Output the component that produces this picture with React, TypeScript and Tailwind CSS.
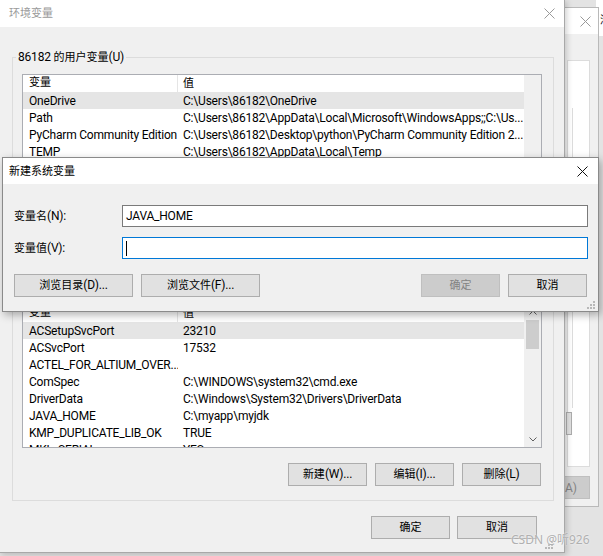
import React from "react";

const F = "font-['Roboto','Noto_Sans_CJK_SC',sans-serif]";

type Row = [string, string];

const userRows: Row[] = [
  ["OneDrive", "C:\\Users\\86182\\OneDrive"],
  ["Path", "C:\\Users\\86182\\AppData\\Local\\Microsoft\\WindowsApps;;C:\\Us..."],
  ["PyCharm Community Edition", "C:\\Users\\86182\\Desktop\\python\\PyCharm Community Edition 2..."],
  ["TEMP", "C:\\Users\\86182\\AppData\\Local\\Temp"],
  ["TMP", "C:\\Users\\86182\\AppData\\Local\\Temp"],
];

const sysRows: Row[] = [
  ["ACSetupSvcPort", "23210"],
  ["ACSvcPort", "17532"],
  ["ACTEL_FOR_ALTIUM_OVER...", ""],
  ["ComSpec", "C:\\WINDOWS\\system32\\cmd.exe"],
  ["DriverData", "C:\\Windows\\System32\\Drivers\\DriverData"],
  ["JAVA_HOME", "C:\\myapp\\myjdk"],
  ["KMP_DUPLICATE_LIB_OK", "TRUE"],
  ["MKL_SERIAL", "YES"],
  ["NUMBER_OF_PROCESSORS", "8"],
];

/* Chinese runs are drawn a little smaller than Latin runs, as in the UI font */
function T({ s }: { s: string }) {
  const parts = s.split(/([\u3400-\u9fff]+)/);
  return (
    <>
      {parts.map((p, i) =>
        /[\u3400-\u9fff]/.test(p) ? (
          <span key={i} className="text-[11px] tracking-normal">
            {p}
          </span>
        ) : (
          <span key={i} className="tracking-[-0.2px]">
            {p}
          </span>
        )
      )}
    </>
  );
}

function CloseX({ color }: { color: string }) {
  return (
    <svg width="11" height="11" viewBox="0 0 11 11">
      <path d="M0.5 0.5 L10.5 10.5 M10.5 0.5 L0.5 10.5" stroke={color} strokeWidth="1" />
    </svg>
  );
}

function Grip() {
  const pts = [
    [8, 2],
    [8, 5],
    [5, 5],
    [8, 8],
    [5, 8],
    [2, 8],
  ];
  return (
    <svg width="10" height="10" viewBox="0 0 10 10">
      {pts.map(([x, y], i) => (
        <rect key={i} x={x - 1} y={y - 1} width="2" height="2" fill="#b8b8b8" />
      ))}
    </svg>
  );
}

function Btn({ label, w, disabled }: { label: string; w: string; disabled?: boolean }) {
  return (
    <div
      className={`${w} h-[23px] flex items-center justify-center border text-[12px] ${
        disabled
          ? "bg-[#cccccc] border-[#bfbfbf] text-[#838383]"
          : "bg-[#e1e1e1] border-[#adadad] text-black"
      }`}
    >
      <span>
        <T s={label} />
      </span>
    </div>
  );
}

function ListView({
  rows,
  height,
  arrows,
}: {
  rows: Row[];
  height: string;
  arrows?: boolean;
}) {
  return (
    <div className={`${height} border border-[#abadb3] bg-white flex overflow-hidden`}>
      <div className="flex-1 flex flex-col overflow-hidden">
        <div className="h-[17px] shrink-0 flex items-center text-[12px]">
          <div className="w-[155px] h-full pl-[6px] flex items-center border-r border-[#e5e5e5]">
            <T s="变量" />
          </div>
          <div className="pl-[5px]">
            <T s="值" />
          </div>
        </div>
        {rows.map(([n, v], i) => (
          <div
            key={n}
            className={`h-[17px] shrink-0 flex items-center text-[12px] whitespace-nowrap tracking-[-0.2px] ${
              i === 0 ? "bg-[#e5e5e5]" : ""
            }`}
          >
            <div className="w-[155px] pl-[6px] overflow-hidden">{n}</div>
            <div className="pl-[5px] flex-1 overflow-hidden">{v}</div>
          </div>
        ))}
      </div>
      <div className="w-[17px] bg-[#f0f0f0] flex flex-col items-center">
        {arrows && (
          <div className="h-[15px] flex items-center justify-center">
            <svg width="8" height="5" viewBox="0 0 8 5">
              <path d="M0.5 4.5 L4 1 L7.5 4.5" stroke="#606060" fill="none" />
            </svg>
          </div>
        )}
        {arrows && <div className="w-[13px] h-[29px] bg-[#cdcdcd]" />}
        <div className="flex-1" />
        {arrows && (
          <div className="h-[15px] flex items-center justify-center">
            <svg width="8" height="5" viewBox="0 0 8 5">
              <path d="M0.5 0.5 L4 4 L7.5 0.5" stroke="#606060" fill="none" />
            </svg>
          </div>
        )}
      </div>
    </div>
  );
}

export default function App() {
  return (
    <div className={`${F} relative w-[603px] h-[556px] overflow-hidden bg-[#e3e3e3] text-black text-[12px]`}>
      {/* far back window at top right */}
      <div className="absolute left-[596px] top-[-4px] w-[20px] h-[40px] bg-white text-[11px] leading-[14px] pl-[4px] pt-[18px]">
        滞
      </div>
      {/* back window */}
      <div className="absolute left-[560px] top-[7px] w-[39px] h-[500px] bg-[#f0f0f0] border border-[#b9b9b9] flex flex-col">
        <div className="h-[26px] bg-white flex items-center pl-[19px]">
          <CloseX color="#999999" />
        </div>
        <div className="flex-1 flex flex-col pl-[6px] pr-[8px] pt-[26px]">
          <div className="h-[407px] bg-white border border-[#dcdcdc] flex flex-col pt-[47px]">
            <div className="w-[5px] h-[300px] border-r border-[#dcdcdc]" />
            <div className="w-[6px] h-[23px] bg-[#e1e1e1] border border-[#adadad] mt-[4px] ml-[-2px]" />
          </div>
          <div className="h-[23px] mt-[9px] ml-[-4px] bg-[#cccccc] border border-[#bfbfbf] text-[#838383] flex items-center pl-[1px]">
            A)
          </div>
        </div>
      </div>

      {/* main window */}
      <div className="absolute left-[-1px] top-[-1px] w-[566px] h-[554px] bg-[#f0f0f0] border border-[#a8a8a8] shadow-[2px_2px_6px_rgba(0,0,0,0.18)] flex flex-col">
        <div className="h-[27px] bg-white flex items-center justify-between pl-[9px] pr-[9px] text-[#9a9a9a]">
          <span className="mt-[-1px]">
            <T s="环境变量" />
          </span>
          <CloseX color="#9a9a9a" />
        </div>
        <div className="flex-1 flex flex-col pl-[12px] pr-[10px] pt-[22px]">
          <fieldset className="border border-[#dcdcdc] pl-[9px] pr-[11px] pt-[8px] pb-[14px]">
            <legend className="ml-[-6px] px-[2px] leading-[16px]">
              <T s="86182 的用户变量(U)" />
            </legend>
            <ListView rows={userRows} height="h-[152px]" />
            <div className="flex justify-end gap-[8px] mt-[15px] pr-[1px]">
              <Btn w="w-[79px]" label="新建(N)..." />
              <Btn w="w-[79px]" label="编辑(E)..." />
              <Btn w="w-[79px]" label="删除(D)" />
            </div>
          </fieldset>
          <fieldset className="border border-[#dcdcdc] pl-[9px] pr-[11px] pt-[8px] pb-[14px]">
            <legend className="ml-[-6px] px-[2px] leading-[16px]">
              <T s="系统变量(S)" />
            </legend>
            <ListView rows={sysRows} height="h-[144px]" arrows />
            <div className="flex justify-end gap-[8px] mt-[15px] pr-[1px]">
              <Btn w="w-[79px]" label="新建(W)..." />
              <Btn w="w-[79px]" label="编辑(I)..." />
              <Btn w="w-[79px]" label="删除(L)" />
            </div>
          </fieldset>
          <div className="flex justify-end gap-[7px] mt-[15px] pr-[17px]">
            <Btn w="w-[79px]" label="确定" />
            <Btn w="w-[80px]" label="取消" />
          </div>
          <div className="flex-1 flex items-end justify-end pr-[0px] pb-[2px]">
            <Grip />
          </div>
        </div>
      </div>

      {/* new system variable dialog */}
      <div className="absolute left-[2px] top-[157px] w-[597px] h-[155px] bg-[#f0f0f0] border border-[#8a8a8a] shadow-[2px_3px_8px_rgba(0,0,0,0.3)] flex flex-col">
        <div className="h-[26px] bg-white flex items-center justify-between pl-[6px] pr-[10px]">
          <span>
            <T s="新建系统变量" />
          </span>
          <CloseX color="#111111" />
        </div>
        <div className="flex-1 flex flex-col pl-[11px] pr-[10px] pt-[21px]">
          <div className="flex items-center">
            <div className="w-[108px]">
              <T s="变量名(N):" />
            </div>
            <div className="flex-1 h-[22px] bg-white border border-[#7a7a7a] flex items-center pl-[3px] tracking-[-0.2px]">
              JAVA_HOME
            </div>
          </div>
          <div className="flex items-center mt-[10px]">
            <div className="w-[108px]">
              <T s="变量值(V):" />
            </div>
            <div className="flex-1 h-[22px] bg-white border border-[#0078d7] flex items-center pl-[3px]">
              <div className="w-[1px] h-[15px] bg-black" />
            </div>
          </div>
          <div className="flex items-center mt-[15px] pr-[1px]">
            <Btn w="w-[119px]" label="浏览目录(D)..." />
            <div className="w-[8px]" />
            <Btn w="w-[119px]" label="浏览文件(F)..." />
            <div className="flex-1" />
            <Btn w="w-[79px]" label="确定" disabled />
            <div className="w-[8px]" />
            <Btn w="w-[79px]" label="取消" />
          </div>
          <div className="flex-1 flex items-end justify-end pb-[1px] mr-[-8px]">
            <Grip />
          </div>
        </div>
      </div>

      {/* watermark */}
      <div className="absolute left-[511px] top-[531px] text-[12px] leading-[18px] text-[#b0b0b0] font-['Noto_Sans','Noto_Sans_CJK_SC',sans-serif] [text-shadow:0_0_2px_#fff]">
        CSDN @听926
      </div>
    </div>
  );
}
